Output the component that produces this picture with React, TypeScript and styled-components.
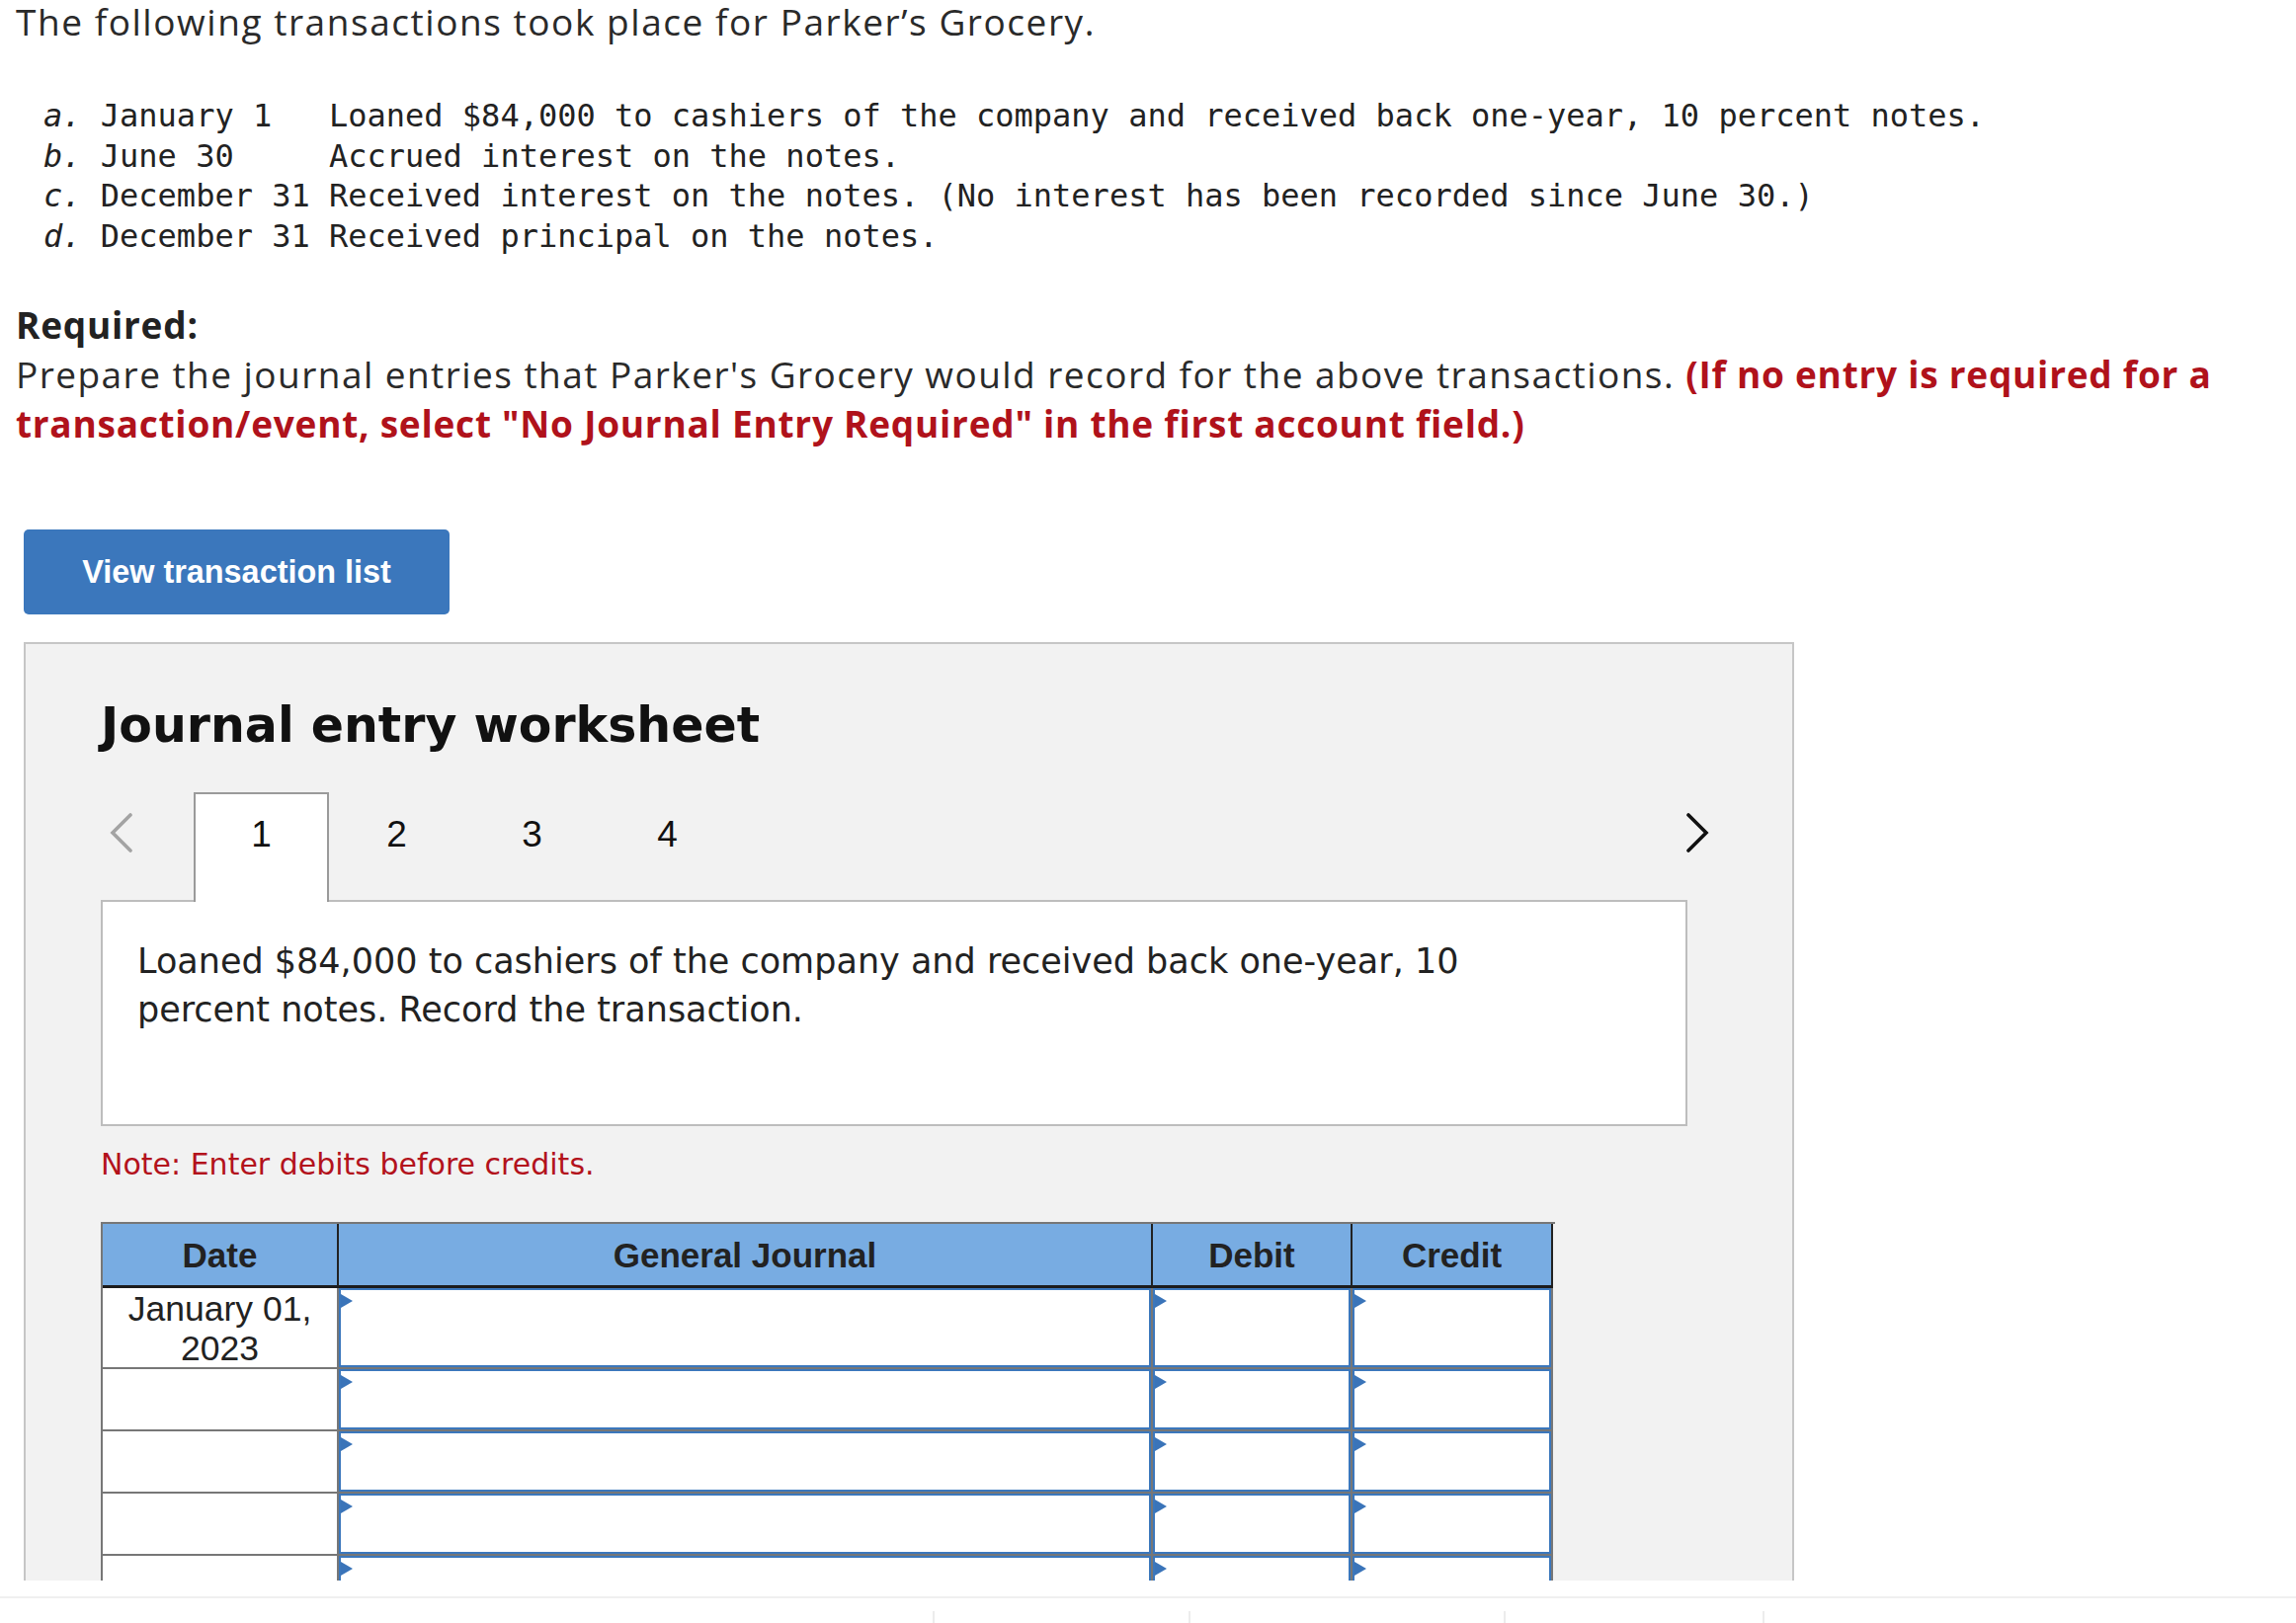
import React from "react";
import styled, { createGlobalStyle } from "styled-components";

const GlobalStyle = createGlobalStyle`
  html, body { margin: 0; padding: 0; background: #ffffff; }
  body {
    width: 2324px;
    height: 1643px;
    overflow: hidden;
    font-family: "Open Sans", "Liberation Sans", sans-serif;
    color: #2b2b2b;
  }
  * { box-sizing: border-box; }
`;

const Page = styled.div`
  width: 2324px;
  height: 1643px;
  display: flex;
  flex-direction: column;
`;

const Main = styled.main`
  flex: none;
  height: 1600px;
  overflow: hidden;
  padding: 2px 0 0 16px;
`;

const Title = styled.p`
  margin: 0;
  font-family: "Open Sans", sans-serif;
  font-size: 37px;
  line-height: 40px;
  letter-spacing: 1.55px;
  color: #2a2a2a;
`;

const TxList = styled.div`
  margin: 55px 0 0 28px;
  font-family: "DejaVu Sans Mono", "Liberation Mono", monospace;
  font-size: 32px;
  line-height: 40.5px;
  white-space: pre;
  color: #222;
`;

const TxLine = styled.div``;

const TxLabel = styled.span`
  font-style: italic;
`;

const Required = styled.div`
  margin-top: 45px;
  width: 2290px;
  font-family: "Open Sans", sans-serif;
  font-size: 37px;
  line-height: 50px;
  letter-spacing: 1.45px;
  color: #2a2a2a;
`;

const RequiredHead = styled.div`
  font-weight: 700;
  letter-spacing: 0.75px;
  color: #222;
`;

const Warn = styled.strong`
  color: #b0121b;
  font-weight: 700;
  letter-spacing: 0.75px;
`;

const ViewButton = styled.button`
  display: block;
  margin: 82px 0 0 8px;
  width: 431px;
  height: 86px;
  border: none;
  border-radius: 5px;
  background: #3b77bc;
  color: #ffffff;
  font-family: "Liberation Sans", Arial, sans-serif;
  font-weight: 700;
  font-size: 32.4px;
  cursor: pointer;
`;

const Panel = styled.section`
  margin: 28px 0 0 8px;
  width: 1792px;
  min-height: 1100px;
  background: #f2f2f2;
  border: 2px solid #c6c6c6;
  padding: 54px 106px 0 76px;
`;

const PanelTitle = styled.h2`
  margin: 0;
  font-family: "DejaVu Sans", Verdana, sans-serif;
  font-weight: 700;
  font-size: 49px;
  line-height: 57px;
  color: #111;
`;

const TabRow = styled.div`
  margin: 39px -40px 0 0;
  height: 109px;
  display: flex;
  align-items: flex-start;
  position: relative;
  z-index: 1;
`;

const NavButton = styled.div<{ $w: number; $pl: number }>`
  flex: none;
  width: ${(p) => p.$w}px;
  padding: 21px 0 0 ${(p) => p.$pl}px;
  display: flex;
`;

const Spacer = styled.div`
  flex: 1;
`;

const Tab = styled.div<{ $active?: boolean }>`
  flex: none;
  width: 137px;
  height: ${(p) => (p.$active ? 111 : 109)}px;
  padding-top: ${(p) => (p.$active ? 22 : 24)}px;
  text-align: center;
  font-family: "Liberation Sans", Arial, sans-serif;
  font-size: 37px;
  line-height: 38px;
  color: #111;
  background: ${(p) => (p.$active ? "#ffffff" : "transparent")};
  border: ${(p) => (p.$active ? "2px solid #9a9a9a" : "none")};
  border-bottom: none;
`;

const ContentBox = styled.div`
  height: 229px;
  background: #ffffff;
  border: 2px solid #bdbdbd;
  padding: 36px 35px 0 35px;
  font-family: "DejaVu Sans", Verdana, sans-serif;
  font-size: 35px;
  line-height: 49px;
  color: #222;
`;

const ContentText = styled.p`
  margin: 0;
  max-width: 1400px;
`;

const Note = styled.p`
  margin: 21px 0 0 0;
  font-family: "DejaVu Sans", Verdana, sans-serif;
  font-size: 30px;
  line-height: 35px;
  color: #b3121c;
`;

const JournalGrid = styled.div`
  margin-top: 41px;
  display: grid;
  grid-template-columns: 239px 824px 202px 203px;
  width: 1472px;
  border-left: 2px solid #777;
  border-top: 2px solid #777;
`;

const HeadCell = styled.div`
  height: 65px;
  background: #78ace2;
  border-right: 2px solid #222;
  border-bottom: 3px solid #1c1c1c;
  display: flex;
  align-items: center;
  justify-content: center;
  padding-top: 2px;
  font-family: "Liberation Sans", Arial, sans-serif;
  font-weight: 700;
  font-size: 35px;
  color: #222;
`;

const DateCell = styled.div<{ $h: number }>`
  height: ${(p) => p.$h}px;
  background: #ffffff;
  border-right: 2px solid #777;
  border-bottom: 2px solid #777;
  padding-top: 1px;
  text-align: center;
  font-family: "Liberation Sans", Arial, sans-serif;
  font-size: 35.5px;
  line-height: 40px;
  color: #222;
`;

const InputCell = styled.div<{ $h: number }>`
  height: ${(p) => p.$h}px;
  background: #ffffff;
  border-right: 2px solid #777;
  border-bottom: 2px solid #777;
  display: flex;
`;

const InputBox = styled.div`
  flex: 1;
  position: relative;
  border: 2px solid #3b77bc;
  background: #ffffff;
`;

const Flag = styled.span`
  position: absolute;
  left: 0;
  top: 4px;
  width: 0;
  height: 0;
  border-top: 7px solid transparent;
  border-bottom: 7px solid transparent;
  border-left: 12px solid #3a74b9;
`;

const Footer = styled.footer`
  flex: none;
  height: 43px;
  padding-top: 16px;
`;

const FooterRule = styled.div`
  border-top: 2px solid #f0f0f0;
`;

const FooterNav = styled.nav`
  margin-top: 13px;
  height: 20px;
  display: grid;
  grid-template-columns: 944px 259px 319px 262px 1fr;
`;

const FooterItem = styled.div<{ $divider?: boolean }>`
  height: 20px;
  border-left: ${(p) => (p.$divider ? "2px solid #ececec" : "none")};
`;

const Chevron = ({ dir, color }: { dir: "left" | "right"; color: string }) => (
  <svg width="26" height="40" viewBox="0 0 26 40" fill="none">
    <polyline
      points={dir === "left" ? "22,2 4,20 22,38" : "4,2 22,20 4,38"}
      stroke={color}
      strokeWidth="3.6"
      strokeLinecap="round"
      strokeLinejoin="miter"
    />
  </svg>
);

const transactions = [
  { label: "a.", text: " January 1   Loaned $84,000 to cashiers of the company and received back one-year, 10 percent notes." },
  { label: "b.", text: " June 30     Accrued interest on the notes." },
  { label: "c.", text: " December 31 Received interest on the notes. (No interest has been recorded since June 30.)" },
  { label: "d.", text: " December 31 Received principal on the notes." },
];

const rows = [
  { date: ["January 01,", "2023"], h: 82 },
  { date: [], h: 63 },
  { date: [], h: 63 },
  { date: [], h: 63 },
  { date: [], h: 63 },
  { date: [], h: 63 },
];

export default function App() {
  return (
    <Page>
      <GlobalStyle />
      <Main>
        <Title>The following transactions took place for Parker’s Grocery.</Title>
        <TxList>
          {transactions.map((t) => (
            <TxLine key={t.label}>
              <TxLabel>{t.label}</TxLabel>
              {t.text}
            </TxLine>
          ))}
        </TxList>
        <Required>
          <RequiredHead>Required:</RequiredHead>
          Prepare the journal entries that Parker's Grocery would record for the above transactions.{" "}
          <Warn>
            (If no entry is required for a transaction/event, select "No Journal Entry Required" in the first account
            field.)
          </Warn>
        </Required>
        <ViewButton type="button">View transaction list</ViewButton>
        <Panel>
          <PanelTitle>Journal entry worksheet</PanelTitle>
          <TabRow>
            <NavButton $w={94} $pl={8}>
              <Chevron dir="left" color="#a3a3a3" />
            </NavButton>
            <Tab $active>1</Tab>
            <Tab>2</Tab>
            <Tab>3</Tab>
            <Tab>4</Tab>
            <Spacer />
            <NavButton $w={43} $pl={0}>
              <Chevron dir="right" color="#111" />
            </NavButton>
          </TabRow>
          <ContentBox>
            <ContentText>
              Loaned $84,000 to cashiers of the company and received back one-year, 10 percent notes. Record the
              transaction.
            </ContentText>
          </ContentBox>
          <Note>Note: Enter debits before credits.</Note>
          <JournalGrid>
            <HeadCell>Date</HeadCell>
            <HeadCell>General Journal</HeadCell>
            <HeadCell>Debit</HeadCell>
            <HeadCell>Credit</HeadCell>
            {rows.map((r, i) => (
              <React.Fragment key={i}>
                <DateCell $h={r.h}>
                  {r.date.map((line) => (
                    <div key={line}>{line}</div>
                  ))}
                </DateCell>
                {[0, 1, 2].map((c) => (
                  <InputCell key={c} $h={r.h}>
                    <InputBox>
                      <Flag />
                    </InputBox>
                  </InputCell>
                ))}
              </React.Fragment>
            ))}
          </JournalGrid>
        </Panel>
      </Main>
      <Footer>
        <FooterRule />
        <FooterNav>
          <FooterItem />
          <FooterItem $divider />
          <FooterItem $divider />
          <FooterItem $divider />
          <FooterItem $divider />
        </FooterNav>
      </Footer>
    </Page>
  );
}
